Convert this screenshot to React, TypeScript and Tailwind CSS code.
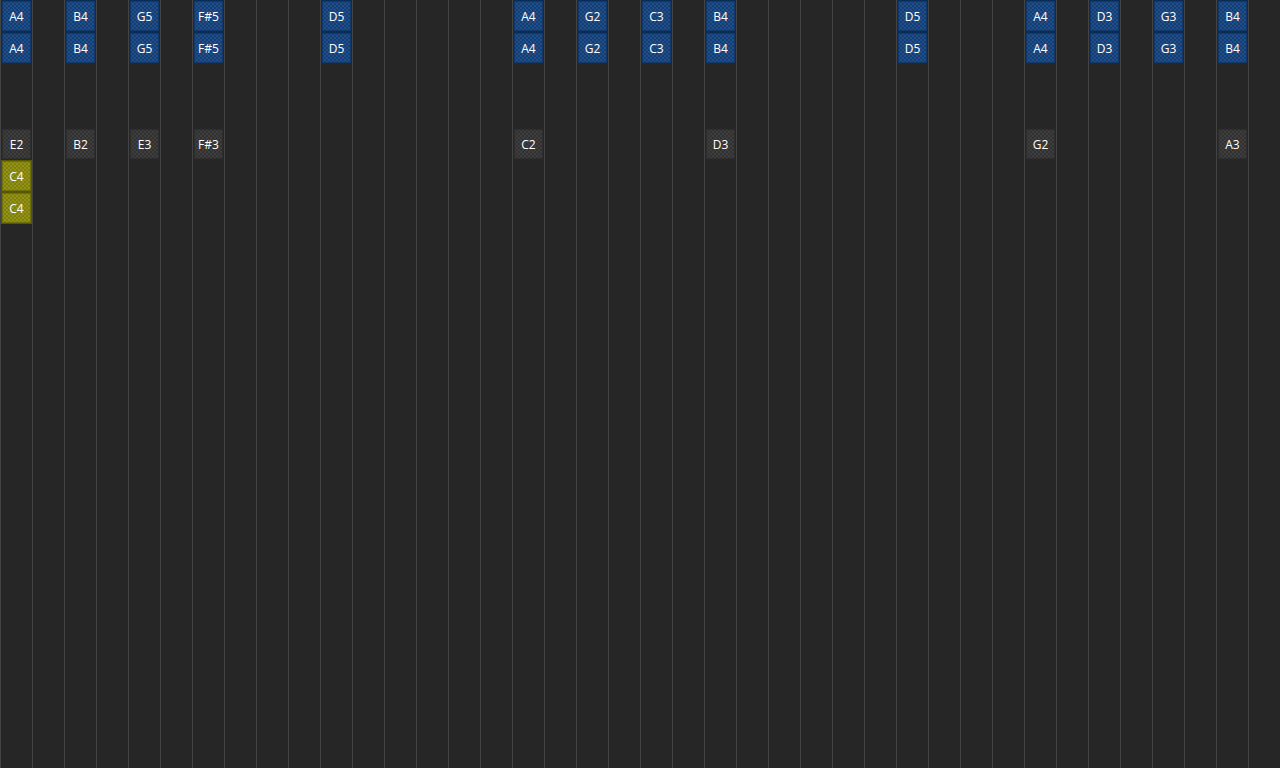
import React from "react";

type Tone = "blue" | "gray" | "yellow";
type Note = { col: number; row: number; label: string; tone: Tone };

const COLS = 40;
const ROWS = 24;

const blueTop: [number, string][] = [
  [0, "A4"], [2, "B4"], [4, "G5"], [6, "F#5"], [10, "D5"], [16, "A4"], [18, "G2"],
  [20, "C3"], [22, "B4"], [28, "D5"], [32, "A4"], [34, "D3"], [36, "G3"], [38, "B4"],
];
const grayRow: [number, string][] = [
  [0, "E2"], [2, "B2"], [4, "E3"], [6, "F#3"], [16, "C2"], [22, "D3"], [32, "G2"], [38, "A3"],
];

const notes: Note[] = [
  ...blueTop.map(([col, label]) => ({ col, row: 0, label, tone: "blue" as Tone })),
  ...blueTop.map(([col, label]) => ({ col, row: 1, label, tone: "blue" as Tone })),
  ...grayRow.map(([col, label]) => ({ col, row: 4, label, tone: "gray" as Tone })),
  { col: 0, row: 5, label: "C4", tone: "yellow" },
  { col: 0, row: 6, label: "C4", tone: "yellow" },
];

const toneClass: Record<Tone, string> = {
  blue:
    "border-[#0a2d57] shadow-[inset_0_0_0_1px_#12386a] bg-[conic-gradient(#163e72_25%,#1f4f8b_0_50%,#163e72_0_75%,#1f4f8b_0)] bg-size-[4px_4px]",
  gray:
    "border-[#272727] shadow-[inset_0_0_0_1px_#2d2d2d] bg-[conic-gradient(#313131_25%,#3e3e3e_0_50%,#313131_0_75%,#3e3e3e_0)] bg-size-[4px_4px]",
  yellow:
    "border-[#575700] shadow-[inset_0_0_0_1px_#6e6e08] bg-[conic-gradient(#7f7f0c_25%,#92921a_0_50%,#7f7f0c_0_75%,#92921a_0)] bg-size-[4px_4px]",
};

function Cell({ note }: { note?: Note }) {
  if (!note) return <div className="h-8" />;
  return (
    <div
      className={`flex h-8 w-[31px] items-center justify-center border pt-px ${toneClass[note.tone]} text-[12px] font-medium text-white`}
      style={{ fontFamily: '"Open Sans", "Noto Sans", sans-serif' }}
    >
      {note.label}
    </div>
  );
}

export default function App() {
  const lookup = new Map<string, Note>();
  notes.forEach((n) => lookup.set(`${n.col}:${n.row}`, n));

  return (
    <div className="flex h-[768px] w-[1280px] overflow-hidden bg-[#262626]">
      {Array.from({ length: COLS }, (_, c) => (
        <div key={c} className="flex w-8 shrink-0 flex-col border-l border-[#434343]">
          {Array.from({ length: ROWS }, (_, r) => (
            <Cell key={r} note={lookup.get(`${c}:${r}`)} />
          ))}
        </div>
      ))}
    </div>
  );
}
